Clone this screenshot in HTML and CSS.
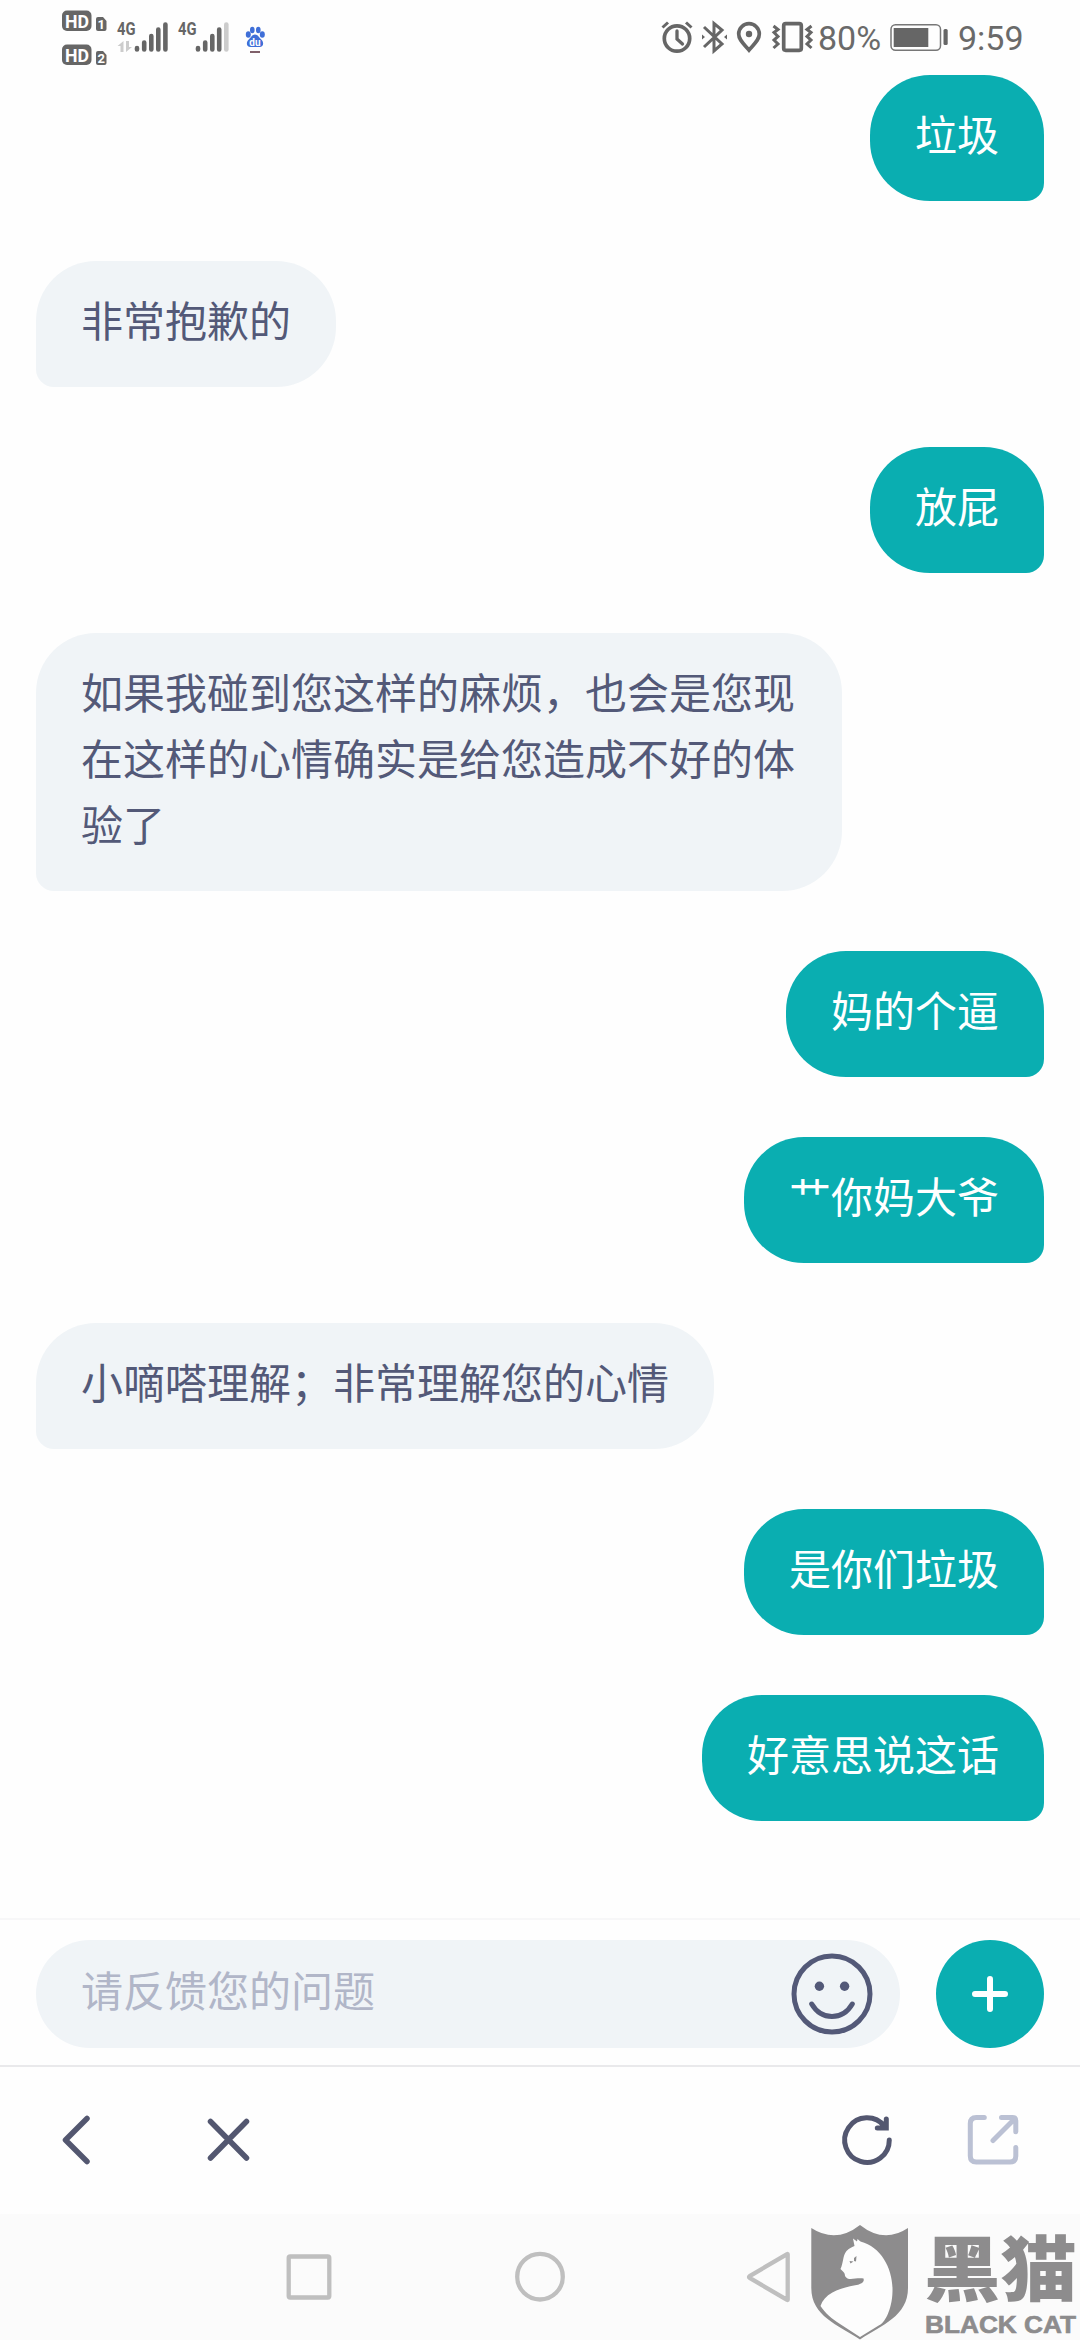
FILE: index.html
```html
<!DOCTYPE html>
<html lang="zh-CN">
<head>
<meta charset="utf-8">
<title>在线客服</title>
<link rel="stylesheet" href="styles.css">
</head>
<body>
<div class="screen">
  <header class="status">
    <svg class="status-left" width="220" height="75" viewBox="60 0 220 75">
      <g fill="#666">
        <rect x="62" y="10.5" width="29.5" height="20.5" rx="5"/>
        <rect x="62" y="44.5" width="29.5" height="20.5" rx="5"/>
        <path d="M98 17h5l3.500 4v8q0 2-2 2h-6.500q-2 0-2-2v-10q0-2 2-2z"/>
        <path d="M98 51h5l3.500 4v8q0 2-2 2h-6.500q-2 0-2-2v-10q0-2 2-2z"/>
      </g>
      <g class="badge-text">
        <text x="65" y="27.500" font-size="19" textLength="24" lengthAdjust="spacingAndGlyphs">HD</text>
        <text x="65" y="61.500" font-size="19" textLength="24" lengthAdjust="spacingAndGlyphs">HD</text>
        <text x="97.500" y="29" font-size="13">1</text>
        <text x="97.500" y="63" font-size="13">2</text>
      </g>
      <g class="net-text">
        <text x="117" y="35.300" font-size="19" textLength="18.500" lengthAdjust="spacingAndGlyphs">4G</text>
        <text x="178" y="35.300" font-size="19" textLength="18.500" lengthAdjust="spacingAndGlyphs">4G</text>
      </g>
      <path fill="#ccc" d="M117.500 46l6-5v11h-3v-6zM126 41v11l6-5h-3v-6z"/>
      <g stroke="#666" stroke-width="4.600" stroke-linecap="round">
        <path d="M137 48v1.500M144.200 42.500v7M151.300 36v13.500M158.300 29.500v20M165.400 24.500v25"/>
        <path d="M198 48v1.500M205.200 42.500v7M212.300 36v13.500M219.200 29.500v20"/>
        <path stroke="#ccc" d="M226.300 24.500v25"/>
      </g>
      <g fill="#3f6fd8">
        <ellipse cx="248.300" cy="34.500" rx="2.500" ry="3.200"/>
        <ellipse cx="252.300" cy="30" rx="2.300" ry="3.200"/>
        <ellipse cx="258.300" cy="30" rx="2.300" ry="3.200"/>
        <ellipse cx="262.300" cy="34.500" rx="2.500" ry="3.200"/>
        <path d="M255 34.500c3 0 4 3 6 4.700 3.500 3 2.500 7.800-1.500 7.800h-9c-4 0-5-4.800-1.500-7.800 2-1.700 3-4.700 6-4.700z"/>
      </g>
      <text class="paw-text" x="249.300" y="45.500" font-size="10">du</text>
      <path d="M250 52h10" stroke="#80606a" stroke-width="2"/>
    </svg>
    <div class="status-right">
      <svg width="160" height="75" viewBox="658 0 160 75" fill="none" stroke="#666" stroke-width="3.700">
        <circle cx="677" cy="38.500" r="12.700"/>
        <path d="M677 31v8l5.500 5" stroke-linecap="round" stroke-width="3.300"/>
        <path d="M662.500 27.500l5.500-5M691.500 27.500l-5.500-5" stroke-width="3"/>
        <path d="M704 27l18 17-8 7V23.500l8 6.500-18 17" stroke-width="3"/>
        <path d="M702 34.500l3 2.500-3 2.500zM727 34.500l-3 2.500 3 2.500z" fill="#666" stroke="none"/>
        <path d="M749 50c-5-6-10.300-10-10.300-16a10.300 10.300 0 0 1 20.600 0c0 6-5.300 10-10.300 16z"/>
        <circle cx="749" cy="34" r="3.200" fill="#666" stroke="none"/>
        <rect x="783.700" y="23.700" width="17.600" height="26.600" rx="2"/>
        <path d="M773.500 26l4.500 3.500-4 3 4 4-4 3.500 4 4-4.500 4M811.500 26l-4.500 3.500 4 3-4 4 4 3.500-4 4 4.500 4" stroke-width="3"/>
      </svg>
      <span class="status-text pct">80%</span>
      <svg width="60" height="75" viewBox="889 0 60 75">
        <rect x="891" y="24.700" width="49.500" height="25.600" rx="4.500" fill="none" stroke="#777" stroke-width="1.500"/>
        <path fill="#666" d="M893.700 28h34.600v19h-34.600z"/>
        <rect x="943.500" y="29" width="4.200" height="16" rx="1.500" fill="#666"/>
      </svg>
      <span class="status-text time">9:59</span>
    </div>
  </header>

  <main class="chat">
    <p class="msg me">垃圾</p>
    <p class="msg bot">非常抱歉的</p>
    <p class="msg me">放屁</p>
    <p class="msg bot">如果我碰到您这样的麻烦，也会是您现在这样的心情确实是给您造成不好的体验了</p>
    <p class="msg me">妈的个逼</p>
    <p class="msg me">艹你妈大爷</p>
    <p class="msg bot">小嘀嗒理解；非常理解您的心情</p>
    <p class="msg me">是你们垃圾</p>
    <p class="msg me">好意思说这话</p>
  </main>

  <section class="composer">
    <div class="field">
      <span class="hint">请反馈您的问题</span>
      <svg width="82" height="82" viewBox="-41 -41 82 82" fill="none" stroke="#535978" stroke-width="5" stroke-linecap="round">
        <circle r="38"/>
        <path d="M-20.300 10Q-13 22.500 0 22.500T20.300 10"/>
        <circle cx="-12.600" cy="-7.800" r="4.700" fill="#535978" stroke="none"/>
        <circle cx="12.600" cy="-7.800" r="4.700" fill="#535978" stroke="none"/>
      </svg>
    </div>
    <div class="add">
      <svg width="40" height="40" viewBox="-20 -20 40 40" stroke="#fff" stroke-width="6" stroke-linecap="round"><path d="M-15 0H15M0-15V15"/></svg>
    </div>
  </section>

  <nav class="toolbar">
    <svg width="60" height="60" viewBox="46 2110 60 60" fill="none" stroke="#535770" stroke-width="5.500" stroke-linecap="round" stroke-linejoin="round"><path d="M87 2118.500L65.500 2140 87 2161.500"/></svg>
    <svg class="close" width="60" height="60" viewBox="198 2110 60 60" stroke="#535770" stroke-width="5.500" stroke-linecap="round"><path d="M210.500 2121.500l36 36.500M246.500 2121.500l-36 36.500"/></svg>
    <svg class="reload" width="60" height="60" viewBox="837 2110 60 60" fill="none" stroke="#535770" stroke-width="5" stroke-linecap="round" stroke-linejoin="miter"><path d="M889.300 2140A22.300 22.300 0 1 1 884.500 2126.300M886.300 2119v9h-9"/></svg>
    <svg width="60" height="60" viewBox="963 2110 60 60" fill="none" stroke="#bbc1d4" stroke-width="5" stroke-linecap="round" stroke-linejoin="round"><path d="M984.300 2117.500h-8q-6 0-6 6v32.500q0 6 6 6h33.500q6 0 6-6v-8.500M1001.500 2117.500h11q3.300 0 3.300 3.300v11M1014.500 2119L993 2140.500"/></svg>
  </nav>

  <footer class="sysnav">
    <svg width="520" height="126" viewBox="280 2214 520 126" fill="none" stroke="#bfbfbf" stroke-width="4.300" stroke-linejoin="round">
      <rect x="288.700" y="2256.500" width="40.600" height="41" rx="1.500"/>
      <circle cx="540" cy="2276.700" r="22.800"/>
      <path d="M787.700 2254.300v45.400q0 .5-.6.200l-37.500-22q-1.200-.9 0-1.800l37.500-22q.6-.3.600.2z"/>
    </svg>
    <svg class="brand" width="280" height="126" viewBox="800 2214 280 126">
      <path fill="#8d8c8d" d="M811.300 2228Q836 2244 860 2225 884 2244 908 2228v60c0 28-26 37-48 51.500-22-14.500-48.700-23.500-48.700-51.500z"/>
      <path fill="#fdfdfd" d="M854.500 2246L853 2238.500l4 3 .5-2.500 3 2.500C882 2247 893 2270 892.500 2291c-.3 20-9 33-13 34L860 2337l-20-13c-8-5-15-11-19.500-18 4-13 20-18 36-21 6-1.500 8-3.500 7-6.500-6-1-12 1.500-16 0-4-2.500-1.500-4-4-6.500l-3-3c3-6 2-13 6-18 3-3 6-4 8-5z"/>
      <path fill="#8d8c8d" d="M849.500 2261l4 .5-3 2zM854 2258l2.500-2-.5 5.500-2-.5z"/>
      <text class="brand-cn" x="924" y="2294.500" textLength="153" lengthAdjust="spacingAndGlyphs">黑猫</text>
      <text class="brand-en" x="925" y="2333" textLength="151" lengthAdjust="spacingAndGlyphs">BLACK CAT</text>
    </svg>
  </footer>
</div>
</body>
</html>
```

FILE: styles.css
```css
* {
  box-sizing: border-box;
}

body {
  margin: 0;
  background: #fefefe;
  font-family: "Noto Sans CJK SC", sans-serif;
}

svg {
  display: block;
  flex: none;
}

.screen {
  width: 1080px;
  height: 2340px;
  display: flex;
  flex-direction: column;
  overflow: hidden;
}

.status {
  height: 75px;
  flex: none;
  display: flex;
  justify-content: space-between;
  padding: 0 57px 0 60px;
}

.status-right {
  display: flex;
}

.status-text {
  font: 400 34px/76px Roboto, sans-serif;
  color: #6a6a6a;
  white-space: nowrap;
}

.pct {
  width: 71px;
}

.time {
  width: 74px;
  padding-left: 9px;
}

.badge-text {
  font-family: Roboto, sans-serif;
  font-weight: 700;
  fill: #fff;
}

.net-text {
  font-family: Roboto, sans-serif;
  font-weight: 700;
  fill: #666;
}

.paw-text {
  font-family: Roboto, sans-serif;
  font-weight: 700;
  fill: #fff;
}

.chat {
  height: 1843px;
  flex: none;
  display: flex;
  flex-direction: column;
  align-items: flex-start;
  gap: 60px;
  padding: 0 36px;
}

.msg {
  margin: 0;
  max-width: 806px;
  padding: 25px 45px 35px;
  font-size: 42px;
  line-height: 66px;
}

.bot {
  background: #f0f4f7;
  color: #535978;
  border-radius: 60px 60px 60px 18px;
}

.me {
  align-self: flex-end;
  background: #0aaeb1;
  color: #fff;
  border-radius: 60px 60px 18px 60px;
}

.composer {
  height: 147px;
  flex: none;
  display: flex;
  gap: 36px;
  padding: 20px 36px 0;
  border-top: 2px solid #f7f7f8;
}

.field {
  width: 864px;
  height: 108px;
  display: flex;
  align-items: center;
  justify-content: space-between;
  padding: 0 27px 0 45px;
  border-radius: 54px;
  background: #f0f4f7;
}

.hint {
  padding-bottom: 10px;
  font-size: 42px;
  line-height: 66px;
  color: #b1b6c8;
}

.add {
  width: 108px;
  height: 108px;
  display: flex;
  align-items: center;
  justify-content: center;
  border-radius: 50%;
  background: #0aaeb1;
}

.toolbar {
  height: 149px;
  flex: none;
  display: flex;
  align-items: center;
  padding: 0 57px 2px 46px;
  border-top: 2px solid #e9e9eb;
}

.close {
  margin-left: 92px;
}

.reload {
  margin-left: auto;
  margin-right: 66px;
}

.sysnav {
  height: 126px;
  flex: none;
  display: flex;
  padding-left: 280px;
  background: #fbfbfb;
}

.brand-cn {
  font-family: "Noto Sans CJK SC", sans-serif;
  font-weight: 900;
  font-size: 71px;
  fill: #8d8c8d;
}

.brand-en {
  font-family: "Liberation Sans", sans-serif;
  font-weight: 700;
  font-size: 23px;
  fill: #8d8c8d;
  stroke: #8d8c8d;
  stroke-width: .6px;
}
```
